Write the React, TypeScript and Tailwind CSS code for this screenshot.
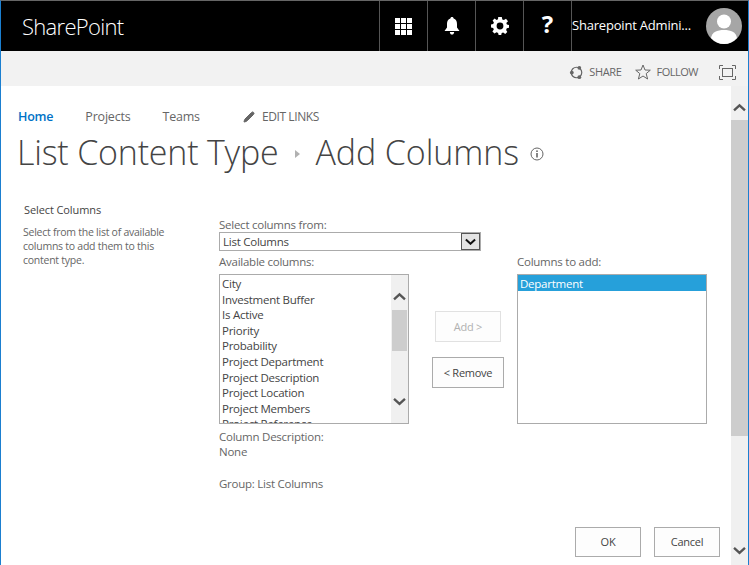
import { Pencil } from "lucide-react";

const FONT = "font-['Open_Sans','Noto_Sans',sans-serif]";

const available = [
  "City",
  "Investment Buffer",
  "Is Active",
  "Priority",
  "Probability",
  "Project Department",
  "Project Description",
  "Project Location",
  "Project Members",
  "Project Reference",
];

const Chevron = ({ up = false, size = 13, color = "#555" }: { up?: boolean; size?: number; color?: string }) => (
  <svg width={size} height={size * 0.7} viewBox="0 0 14 10" className="block">
    <path
      d={up ? "M1 8 L7 2.5 L13 8" : "M1 2 L7 7.5 L13 2"}
      fill="none"
      stroke={color}
      strokeWidth="2.6"
    />
  </svg>
);

const SuiteCell = ({ children }: { children: React.ReactNode }) => (
  <div className="w-[48px] h-full border-l border-[#555] flex items-center justify-center">
    {children}
  </div>
);

const App = () => {
  return (
    <div
      className={`${FONT} w-[749px] h-[565px] overflow-hidden flex flex-col bg-white border-l border-r border-t border-l-[#1b7fd0] border-r-[#1b7fd0] border-t-[#666] text-[#666]`}
    >
      {/* Suite bar */}
      <header className="h-[50px] shrink-0 bg-black flex items-center text-white">
        <div className="pl-[21px] text-[22px] font-light tracking-[-0.7px] flex-1">SharePoint</div>
        <SuiteCell>
          <div className="grid grid-cols-3 gap-[1px]">
            {Array.from({ length: 9 }).map((_, i) => (
              <span key={i} className="w-[5px] h-[5px] bg-white" />
            ))}
          </div>
        </SuiteCell>
        <SuiteCell>
          <svg width="16" height="18" viewBox="0 0 16 18">
            <path
              fill="#fff"
              d="M8 0 C9 0 9.6 .7 9.6 1.6 C12 2.4 13 4.4 13 7 V10.5 L15.5 14 H.5 L3 10.5 V7 C3 4.4 4 2.4 6.4 1.6 C6.4 .7 7 0 8 0 Z M5.8 15 H10.2 C10 16.6 9.2 17.6 8 17.6 C6.8 17.6 6 16.6 5.8 15 Z"
            />
          </svg>
        </SuiteCell>
        <SuiteCell>
          <svg width="18" height="18" viewBox="0 0 18 18">
            <path
              fill="#fff"
              fillRule="evenodd"
              d="M7.2 0 H10.8 L11.3 2.4 L12.9 3.1 L15 1.8 L17 4.2 L15.3 6 L15.9 7.6 L18 8 V10.8 L15.8 11.3 L15.1 12.9 L16.3 15 L14.2 17 L12.2 15.4 L10.7 16 L10.2 18 H7.6 L7.1 16 L5.5 15.3 L3.5 16.6 L1.4 14.6 L2.8 12.6 L2.2 11 L0 10.5 V7.6 L2.2 7.1 L2.9 5.5 L1.6 3.5 L3.6 1.5 L5.6 2.9 L7 2.3 Z M9 5.6 A3.4 3.4 0 1 0 9 12.4 A3.4 3.4 0 1 0 9 5.6 Z"
            />
          </svg>
        </SuiteCell>
        <SuiteCell>
          <span className="text-[24px] font-bold leading-none pb-[5px]">?</span>
        </SuiteCell>
        <div className="h-full w-[177px] border-l border-[#555] flex items-center pr-[6px] justify-between">
          <span className="text-[13px] tracking-[-0.2px] whitespace-nowrap">Sharepoint Admini...</span>
          <svg width="36" height="36" viewBox="0 0 36 36" className="shrink-0">
            <circle cx="18" cy="18" r="18" fill="#a6a6a6" />
            <circle cx="18" cy="13.5" r="7" fill="#fff" />
            <path fill="#fff" d="M5 30 C6 24 11 22 18 22 C25 22 30 24 31 30 C27 34 23 36 18 36 C13 36 9 34 5 30 Z" />
          </svg>
        </div>
      </header>

      {/* Ribbon */}
      <div className="h-[35px] shrink-0 bg-[#f2f2f2] flex items-center justify-end text-[11px] text-[#666] tracking-[-0.35px] pr-[12px] pt-[7px]">
        <svg width="15" height="15" viewBox="0 0 16 16" className="mr-[5px]">
          <circle cx="8" cy="8" r="5.6" fill="none" stroke="#666" strokeWidth="1.3" />
          <circle cx="3" cy="8" r="2" fill="#666" />
          <circle cx="11" cy="3" r="2" fill="#666" />
          <circle cx="11" cy="13" r="2" fill="#666" />
        </svg>
        <span>SHARE</span>
        <svg width="16" height="16" viewBox="0 0 16 16" className="ml-[13px] mr-[6px]">
          <path
            d="M8 1 L10 6 L15.3 6.2 L11.2 9.6 L12.6 15 L8 12 L3.4 15 L4.8 9.6 L.7 6.2 L6 6 Z"
            fill="none"
            stroke="#666"
            strokeWidth="1"
          />
        </svg>
        <span className="tracking-[-0.5px]">FOLLOW</span>
        <svg width="17" height="15" viewBox="0 0 17 15" className="ml-[21px]">
          <rect x="3.5" y="3.5" width="10" height="8" fill="none" stroke="#666" />
          <path d="M.5 4 V.5 H4 M13 .5 H16.5 V4 M.5 11 V14.5 H4 M13 14.5 H16.5 V11" fill="none" stroke="#666" />
        </svg>
      </div>

      <div className="flex-1 flex min-h-0">
        {/* Page */}
        <main className="flex-1 min-w-0 pl-[17px] pr-[11px]">
          <nav className="flex items-center h-[22px] mt-[20px] text-[12.5px] tracking-[-0.2px]">
            <a className="font-semibold text-[#0072c6]">Home</a>
            <a className="ml-[32px]">Projects</a>
            <a className="ml-[32px]">Teams</a>
            <Pencil size={12} fill="#666" stroke="#666" className="ml-[43px]" />
            <a className="ml-[7px] text-[12px] tracking-[-0.4px]">EDIT LINKS</a>
          </nav>

          <div className="flex items-center h-[44px] mt-[2px] -ml-[1px] text-[#444] text-[34px] font-light tracking-[-0.2px] whitespace-nowrap">
            <span>List Content Type</span>
            <span className="ml-[16px] mr-[16px] w-0 h-0 border-y-[4px] border-y-transparent border-l-[5px] border-l-[#b1b1b1] mt-[4px]" />
            <span className="tracking-[-0.1px]">Add Columns</span>
            <svg width="14" height="14" viewBox="0 0 14 14" className="ml-[11px] mt-[4px]">
              <circle cx="7" cy="7" r="6" fill="none" stroke="#666" />
              <rect x="6.2" y="6" width="1.6" height="4.5" fill="#666" />
              <rect x="6.2" y="3.4" width="1.6" height="1.6" fill="#666" />
            </svg>
          </div>

          <section className="flex mt-[27px]">
            <aside className="w-[201px] shrink-0 pl-[6px]">
              <h3 className="mt-[1px] text-[11px] leading-[15px] text-[#444] tracking-[-0.1px]">Select Columns</h3>
              <p className="mt-[8px] -ml-[1px] w-[160px] text-[10.5px] leading-[14px] tracking-[-0.25px]">
                Select from the list of available columns to add them to this content type.
              </p>
            </aside>

            <div className="flex-1 min-w-0 pt-[16px] text-[11.5px] tracking-[-0.25px]">
              <div className="leading-[15px]">Select columns from:</div>
              <div className="w-[262px] h-[19px] border border-[#ababab] flex items-center justify-between text-[#444] pl-[3px]">
                <span>List Columns</span>
                <span className="w-[19px] h-[17px] bg-[#e3e3e3] border border-[#555] flex items-center justify-center">
                  <Chevron size={11} color="#111" />
                </span>
              </div>

              <div className="flex mt-[3px]">
                <div className="w-[190px] shrink-0">
                  <div className="leading-[15px] mb-[5px]">Available columns:</div>
                  <div className="h-[150px] border border-[#ababab] flex overflow-hidden">
                    <ul className="flex-1 min-w-0 pl-[2px] pt-[1px] text-[#444] text-[11.5px] leading-[15.6px] whitespace-nowrap overflow-hidden">
                      {available.map((name) => (
                        <li key={name}>{name}</li>
                      ))}
                    </ul>
                    <div className="w-[17px] h-full shrink-0 bg-[#f0f0f0] flex flex-col items-center">
                      <div className="h-[34px] flex items-center justify-center pt-[10px]">
                        <Chevron up />
                      </div>
                      <div className="w-[15px] h-[41px] mt-[1px] bg-[#cdcdcd]" />
                      <div className="mt-[46px]">
                        <Chevron />
                      </div>
                    </div>
                  </div>
                  <div className="mt-[5px] leading-[15px]">
                    <div>Column Description:</div>
                    <div>None</div>
                    <div className="mt-[17px]">Group: List Columns</div>
                  </div>
                </div>

                <div className="w-[108px] shrink-0 flex flex-col items-center pt-[57px] pl-[10px]">
                  <button className="w-[66px] h-[31px] pt-[1px] border border-[#e1e1e1] bg-[#fdfdfd] text-[#b1b1b1] text-[11px]">
                    Add &gt;
                  </button>
                  <button className="w-[72px] h-[31px] pt-[1px] mt-[15px] border border-[#ababab] bg-[#fdfdfd] text-[#444] text-[11px]">
                    &lt; Remove
                  </button>
                </div>

                <div className="w-[190px] shrink-0">
                  <div className="leading-[15px] mb-[5px]">Columns to add:</div>
                  <div className="h-[150px] border border-[#ababab]">
                    <div className="h-[16px] bg-[#26a0da] text-white pl-[2px] leading-[17px]">Department</div>
                  </div>
                </div>
              </div>

              <div className="flex justify-end gap-[13px] mt-[36px]">
                <button className="w-[66px] h-[30px] border border-[#ababab] bg-[#fdfdfd] text-[#444] text-[11px]">
                  OK
                </button>
                <button className="w-[66px] h-[30px] border border-[#ababab] bg-[#fdfdfd] text-[#444] text-[11px]">
                  Cancel
                </button>
              </div>
            </div>
          </section>
        </main>

        {/* Page scrollbar */}
        <div className="w-[17px] shrink-0 bg-[#f0f0f0] flex flex-col items-center">
          <div className="h-[34px] flex items-center justify-center pt-[10px]">
            <Chevron up />
          </div>
          <div className="w-[17px] h-[316px] bg-[#cdcdcd]" />
          <div className="flex-1 flex items-end pb-[10px]">
            <Chevron />
          </div>
        </div>
      </div>
    </div>
  );
};

export default App;
